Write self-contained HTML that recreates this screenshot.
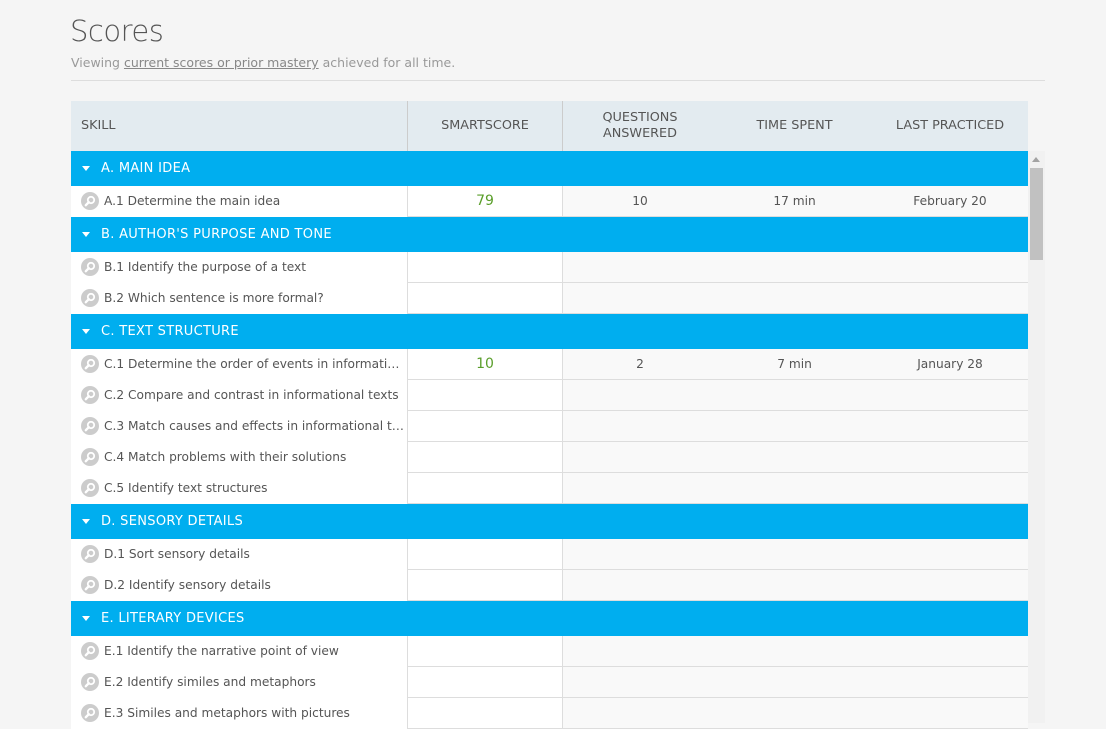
<!DOCTYPE html>
<html><head><style>
*{margin:0;padding:0;box-sizing:border-box}
body{width:1106px;height:723px;overflow:hidden;background:#f5f5f5;font-family:"DejaVu Sans","Liberation Sans",sans-serif;color:#555;position:relative}
h1{position:absolute;left:70px;top:14px;font-weight:200;font-size:29px;color:#555;font-family:"DejaVu Sans","Liberation Sans",sans-serif;letter-spacing:-0.5px}
.sub{position:absolute;left:71px;top:55px;font-size:12.5px;color:#999}
.sub u{color:#888}
.hr{position:absolute;left:71px;top:80px;width:974px;height:1px;background:#ddd}
.t{position:absolute;left:71px;top:101px;width:957px}
.hd{height:50px;background:#e3ebf0;position:relative;font-size:12.8px;color:#555}
.hd div{position:absolute;top:0;height:50px;display:flex;align-items:center;justify-content:center;text-align:center;line-height:16px}
.g{height:35px;background:#00aeef;color:#fff;font-size:13px;line-height:36px;padding-left:30px;position:relative;letter-spacing:.3px}
.g:before{content:"";position:absolute;left:11px;top:15px;border-left:4px solid transparent;border-right:4px solid transparent;border-top:5px solid #fff}
.r{height:31px;position:relative;font-size:12.2px;background:#f9f9f9}
.r>div{position:absolute;top:0;height:31px;line-height:30px;text-align:center;border-bottom:1px solid #ddd}
.r .s{left:0;width:336px;background:#fff;text-align:left;padding-left:33px;padding-right:3px;border-bottom:none;white-space:nowrap;overflow:hidden;text-overflow:ellipsis}
.ic{position:absolute;left:10px;top:6px;width:18px;height:18px}
.r .c1{left:336px;width:155px;background:#fff;border-left:1px solid #ddd;color:#5a9e2a;font-size:14px}
.r .c2{left:491px;width:155px;border-left:1px solid #ddd}
.r .c3{left:646px;width:155px}
.r .c4{left:801px;width:156px}
.lr{position:absolute;left:1028px;top:151px;width:17px;height:572px;background:#f1f1f1}
.th{position:absolute;left:1030px;top:168px;width:13px;height:92px;background:#c1c1c1}
.ar{position:absolute;left:1032px;top:157px;border-left:4px solid transparent;border-right:4px solid transparent;border-bottom:5px solid #a3a3a3}
</style></head><body>
<svg width="0" height="0" style="position:absolute"><defs><symbol id="m" viewBox="0 0 18 18"><circle cx="9" cy="9" r="9" fill="#ccc"/><circle cx="10" cy="8" r="3.2" fill="none" stroke="#fff" stroke-width="1.8"/><path d="M7.8 10.2 L4.8 13.2" stroke="#fff" stroke-width="2.4" stroke-linecap="round"/></symbol></defs></svg>
<h1>Scores</h1>
<div class="sub">Viewing <u>current scores or prior mastery</u> achieved for all time.</div>
<div class="hr"></div>
<div class="t">
<div class="hd">
<div style="left:10px;justify-content:flex-start">SKILL</div>
<div style="left:336px;width:155px;border-left:1px solid #ccc">SMARTSCORE</div>
<div style="left:491px;width:155px;border-left:1px solid #ccc">QUESTIONS<br>ANSWERED</div>
<div style="left:646px;width:155px">TIME SPENT</div>
<div style="left:801px;width:156px">LAST PRACTICED</div>
</div>
<div class="g">A. MAIN IDEA</div>
<div class="r"><div class="s"><svg class="ic"><use href="#m"/></svg>A.1 Determine the main idea</div><div class="c1">79</div><div class="c2">10</div><div class="c3">17 min</div><div class="c4">February 20</div></div>
<div class="g">B. AUTHOR'S PURPOSE AND TONE</div>
<div class="r"><div class="s"><svg class="ic"><use href="#m"/></svg>B.1 Identify the purpose of a text</div><div class="c1"></div><div class="c2"></div><div class="c3"></div><div class="c4"></div></div>
<div class="r"><div class="s"><svg class="ic"><use href="#m"/></svg>B.2 Which sentence is more formal?</div><div class="c1"></div><div class="c2"></div><div class="c3"></div><div class="c4"></div></div>
<div class="g">C. TEXT STRUCTURE</div>
<div class="r"><div class="s"><svg class="ic"><use href="#m"/></svg>C.1 Determine the order of events in informational texts</div><div class="c1">10</div><div class="c2">2</div><div class="c3">7 min</div><div class="c4">January 28</div></div>
<div class="r"><div class="s"><svg class="ic"><use href="#m"/></svg>C.2 Compare and contrast in informational texts</div><div class="c1"></div><div class="c2"></div><div class="c3"></div><div class="c4"></div></div>
<div class="r"><div class="s"><svg class="ic"><use href="#m"/></svg>C.3 Match causes and effects in informational texts</div><div class="c1"></div><div class="c2"></div><div class="c3"></div><div class="c4"></div></div>
<div class="r"><div class="s"><svg class="ic"><use href="#m"/></svg>C.4 Match problems with their solutions</div><div class="c1"></div><div class="c2"></div><div class="c3"></div><div class="c4"></div></div>
<div class="r"><div class="s"><svg class="ic"><use href="#m"/></svg>C.5 Identify text structures</div><div class="c1"></div><div class="c2"></div><div class="c3"></div><div class="c4"></div></div>
<div class="g">D. SENSORY DETAILS</div>
<div class="r"><div class="s"><svg class="ic"><use href="#m"/></svg>D.1 Sort sensory details</div><div class="c1"></div><div class="c2"></div><div class="c3"></div><div class="c4"></div></div>
<div class="r"><div class="s"><svg class="ic"><use href="#m"/></svg>D.2 Identify sensory details</div><div class="c1"></div><div class="c2"></div><div class="c3"></div><div class="c4"></div></div>
<div class="g">E. LITERARY DEVICES</div>
<div class="r"><div class="s"><svg class="ic"><use href="#m"/></svg>E.1 Identify the narrative point of view</div><div class="c1"></div><div class="c2"></div><div class="c3"></div><div class="c4"></div></div>
<div class="r"><div class="s"><svg class="ic"><use href="#m"/></svg>E.2 Identify similes and metaphors</div><div class="c1"></div><div class="c2"></div><div class="c3"></div><div class="c4"></div></div>
<div class="r"><div class="s"><svg class="ic"><use href="#m"/></svg>E.3 Similes and metaphors with pictures</div><div class="c1"></div><div class="c2"></div><div class="c3"></div><div class="c4"></div></div>
</div>
<div class="lr"></div><div class="th"></div><div class="ar"></div>
</body></html>
